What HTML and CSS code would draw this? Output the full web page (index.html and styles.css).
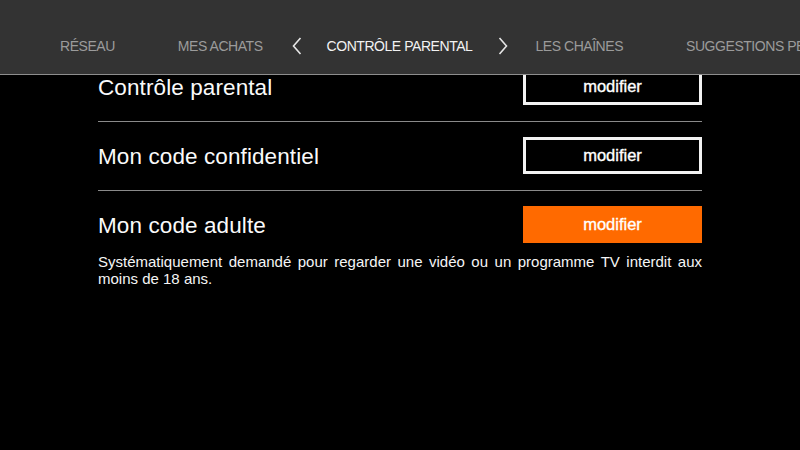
FILE: index.html
```html
<!DOCTYPE html>
<html lang="fr">
<head>
<meta charset="utf-8">
<title>Contrôle parental</title>
<link rel="stylesheet" href="styles.css">
</head>
<body>
<header class="topbar">
  <nav class="tabs">
    <div class="tabs-side tabs-left">
      <span class="tab">RÉSEAU</span>
      <span class="tab">MES ACHATS</span>
    </div>
    <div class="tabs-center">
      <svg class="chev" width="10" height="18" viewBox="0 0 10 18"><path d="M8.5 1 L1.5 9 L8.5 17" fill="none" stroke="#e6e6e6" stroke-width="1.6"/></svg>
      <span class="tab tab-active">CONTRÔLE PARENTAL</span>
      <svg class="chev" width="10" height="18" viewBox="0 0 10 18"><path d="M1.5 1 L8.5 9 L1.5 17" fill="none" stroke="#e6e6e6" stroke-width="1.6"/></svg>
    </div>
    <div class="tabs-side tabs-right">
      <span class="tab">LES CHAÎNES</span>
      <span class="tab">SUGGESTIONS PERSONNALISÉES</span>
    </div>
  </nav>
</header>

<main class="settings">
  <div class="row">
    <span class="label">Contrôle parental</span>
    <button class="btn">modifier</button>
  </div>
  <div class="row">
    <span class="label">Mon code confidentiel</span>
    <button class="btn">modifier</button>
  </div>
  <div class="row row-last">
    <span class="label">Mon code adulte</span>
    <button class="btn btn-focus">modifier</button>
  </div>
  <p class="desc">Systématiquement demandé pour regarder une vidéo ou un programme TV interdit aux moins de 18 ans.</p>
</main>
</body>
</html>
```

FILE: styles.css
```css
* { box-sizing: border-box; }

html, body {
  margin: 0;
  padding: 0;
  background: #000;
  width: 800px;
  height: 450px;
  overflow: hidden;
  font-family: "Liberation Sans", Arial, sans-serif;
  color: #fff;
}

.topbar {
  position: fixed;
  top: 0;
  left: 0;
  width: 800px;
  height: 75px;
  background: #333333;
  border-bottom: 1px solid #8e8e8e;
  z-index: 10;
  padding-top: 18px;
}

.tabs {
  display: grid;
  grid-template-columns: 1fr auto 1fr;
  height: 56px;
  align-items: center;
}

.tabs-side {
  display: flex;
  align-items: center;
  gap: 63px;
  overflow: hidden;
  white-space: nowrap;
}

.tabs-left {
  justify-content: flex-end;
  padding-right: 29px;
}

.tabs-right {
  justify-content: flex-start;
  padding-left: 27px;
}

.tabs-center {
  display: flex;
  align-items: center;
  gap: 25px;
}

.tab {
  font-size: 14px;
  letter-spacing: -0.45px;
  color: #9b9b9b;
  white-space: nowrap;
  flex: none;
}

.tab-active {
  color: #f2f2f2;
  margin-right: 1px;
}

.chev { display: block; flex: none; }

.settings {
  margin: 0 98px;
  padding-top: 53px;
}

.row {
  display: flex;
  align-items: center;
  justify-content: space-between;
  padding: 15px 0 16px;
  border-bottom: 1px solid #8a8a8a;
}

.row-last {
  border-bottom: none;
  padding-bottom: 0;
}

.label {
  font-size: 22.5px;
  letter-spacing: 0.1px;
  margin-top: 3px;
  color: #fafafa;
}

.btn {
  width: 179px;
  height: 37px;
  background: #000;
  border: 3px solid #f2f2f2;
  color: #fff;
  font-family: "Liberation Sans", Arial, sans-serif;
  font-size: 16.5px;
  font-weight: normal;
  -webkit-text-stroke: 0.35px #fff;
  padding: 0;
}

.btn-focus {
  background: #ff6a00;
  border-color: #ff6a00;
}

.desc {
  margin: 10px 0 0;
  font-size: 15px;
  line-height: 17px;
  text-align: justify;
  color: #f5f5f5;
}
```
